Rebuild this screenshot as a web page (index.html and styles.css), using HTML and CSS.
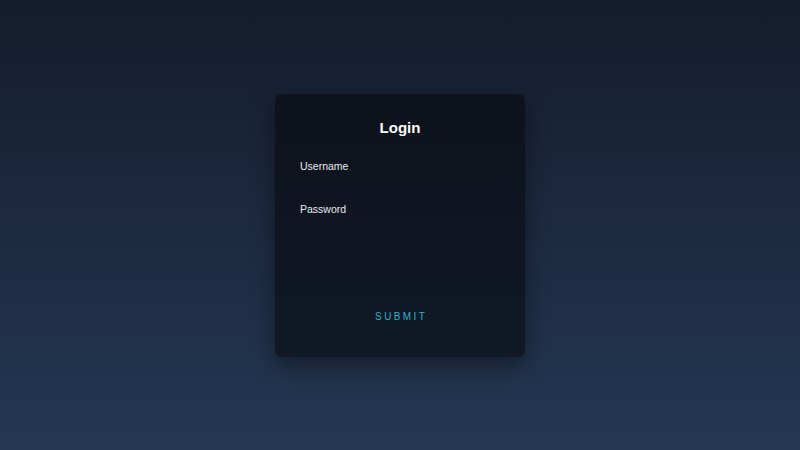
FILE: index.html
```html
<!DOCTYPE html>
<html lang="en">
<head>
  <meta charset="UTF-8" />
  <meta name="viewport" content="width=device-width, initial-scale=1" />
  <title>Login</title>
  <link rel="stylesheet" href="styles.css">
</head>
<body>
  <div class="login-card">
    <h2>Login</h2>
    <form id="login-form">
      <div class="field">
        <label for="username">Username</label>
        <input type="text" id="username" name="username" autocomplete="off">
      </div>
      <div class="field">
        <label for="password">Password</label>
        <input type="password" id="password" name="password">
      </div>
      <button type="submit">Submit</button>
    </form>
  </div>
</body>
</html>
```

FILE: styles.css
```css
* {
  box-sizing: border-box;
}

body {
  margin: 0;
  font-family: "Liberation Sans", Arial, sans-serif;
  background: linear-gradient(180deg, #151c2d, #243853);
  display: flex;
  justify-content: center;
  align-items: flex-start;
  height: 100vh;
  padding-top: 94px;
}

.login-card {
  width: 250px;
  padding: 24px 25px 24px;
  border-radius: 6px;
  background: linear-gradient(180deg, #0d121b, #111927);
  box-shadow: 0 10px 24px rgba(0, 0, 0, 0.4);
}

h2 {
  margin: 0 0 22px;
  font-size: 15px;
  line-height: 20px;
  text-align: center;
  color: #fff;
}

form {
  display: flex;
  flex-direction: column;
}

.field label {
  display: block;
  font-size: 10.5px;
  line-height: 12px;
  color: #e6e9ee;
}

.field input {
  display: block;
  width: 100%;
  height: 27px;
  margin-top: 4px;
  padding: 0;
  border: none;
  outline: none;
  background: transparent;
  color: #fff;
  font-size: 10px;
}

button {
  margin-top: 55px;
  align-self: center;
  padding: 10px 0 10px 2.4px;
  background: none;
  border: none;
  color: #2eb0c6;
  font-family: inherit;
  font-size: 10px;
  line-height: 12px;
  letter-spacing: 2.4px;
  text-transform: uppercase;
  cursor: pointer;
}
```
